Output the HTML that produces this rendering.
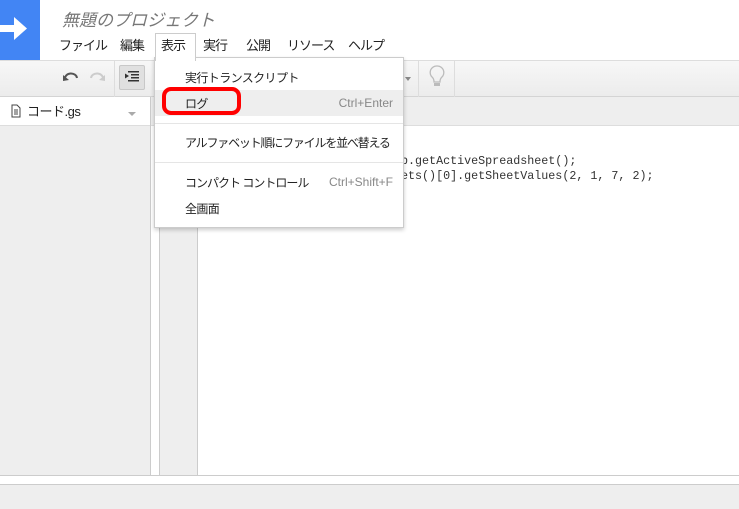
<!DOCTYPE html>
<html><head><meta charset="utf-8"><style>
*{margin:0;padding:0;box-sizing:border-box}
body{width:739px;height:509px;overflow:hidden;background:#fff;position:relative;font-family:"Liberation Sans","Noto Sans CJK JP",sans-serif;color:#222}
.a{position:absolute}
.m{font-size:13px;top:35px;color:#222;white-space:nowrap;letter-spacing:-1px}
.mi{position:absolute;left:30px;font-size:12px;color:#222;white-space:nowrap;letter-spacing:-0.6px}
.sc{position:absolute;right:10px;font-size:12px;color:#888;white-space:nowrap}
.code{position:absolute;font-family:"Liberation Mono",monospace;font-size:11.7px;color:#333;white-space:pre}
</style></head><body>
<div class="a" style="left:0;top:0;width:40px;height:60px;background:#4285f4">
<svg width="40" height="60" style="position:absolute;left:0;top:0"><rect x="0" y="25" width="18" height="7" fill="#fff"/><polygon points="14,17 27,28.5 14,40" fill="#fff"/></svg></div>
<div class="a" style="left:62px;top:6px;font-size:17px;font-style:italic;color:#777">無題のプロジェクト</div>
<div class="a m" style="left:59px">ファイル</div>
<div class="a m" style="left:120px">編集</div>
<div class="a" style="left:155px;top:33px;width:41px;height:28px;border:1px solid #ccc;border-bottom:none;background:#fff;z-index:3"></div>
<div class="a m" style="left:161px;z-index:4">表示</div>
<div class="a m" style="left:203px">実行</div>
<div class="a m" style="left:246px">公開</div>
<div class="a m" style="left:287px">リソース</div>
<div class="a m" style="left:348px">ヘルプ</div>
<!-- toolbar -->
<div class="a" style="left:0;top:60px;width:739px;height:37px;background:linear-gradient(#f7f7f7,#ececec);border-top:1px solid #ddd;border-bottom:1px solid #d4d4d4"></div>
<div class="a" style="left:114px;top:60px;width:1px;height:37px;background:#ddd"></div>
<div class="a" style="left:418px;top:60px;width:1px;height:37px;background:#ddd"></div>
<div class="a" style="left:454px;top:60px;width:1px;height:37px;background:#ddd"></div>
<svg class="a" style="left:60px;top:68px" width="50" height="20"><path d="M5 11 A6 5 0 0 1 17 10" stroke="#555" stroke-width="2" fill="none"/><polygon points="3,7 9,12 3,13" fill="#555"/><path d="M43 11 A6 5 0 0 0 31 10" stroke="#ccc" stroke-width="2" fill="none"/><polygon points="45,7 39,12 45,13" fill="#ccc"/></svg>
<div class="a" style="left:119px;top:65px;width:26px;height:25px;border:1px solid #c8c8c8;border-radius:2px;background:#e0e0e0"></div>
<svg class="a" style="left:124px;top:70px" width="16" height="14"><rect x="4" y="1" width="11" height="1.5" fill="#333"/><rect x="7" y="4" width="8" height="1.5" fill="#333"/><rect x="7" y="7" width="8" height="1.5" fill="#333"/><rect x="4" y="10" width="11" height="1.5" fill="#333"/><polygon points="1,3.5 5,6 1,8.5" fill="#333"/></svg>
<div class="a" style="left:405px;top:77px;width:0;height:0;border:3px solid transparent;border-top:4px solid #888"></div>
<svg class="a" style="left:428px;top:64px" width="18" height="28"><path d="M9 2 A6.5 6.5 0 0 0 4.5 13.5 Q6 15 6 18 L12 18 Q12 15 13.5 13.5 A6.5 6.5 0 0 0 9 2Z" stroke="#bbb" stroke-width="1.3" fill="none"/><rect x="6" y="19" width="6" height="3" fill="#bbb"/></svg>
<!-- left panel -->
<div class="a" style="left:0;top:97px;width:151px;height:378px;background:#eee;border-right:1px solid #ccc"></div>
<div class="a" style="left:0;top:97px;width:150px;height:29px;background:#fff;border-bottom:1px solid #ddd"></div>
<svg class="a" style="left:11px;top:104px" width="10" height="14"><path d="M1 1 H6 L9 4 V13 H1Z" stroke="#444" fill="none"/><path d="M3 6H7M3 8H7M3 10H7" stroke="#444"/></svg>
<div class="a" style="left:27px;top:101px;font-size:13px;color:#222;letter-spacing:-0.5px">コード.gs</div>
<div class="a" style="left:128px;top:112px;border:4px solid transparent;border-top:4px solid #aaa"></div>
<!-- tab bar -->
<div class="a" style="left:151px;top:97px;width:588px;height:29px;background:#eee;border-bottom:1px solid #ddd"></div>
<div class="a" style="left:159px;top:126px;width:39px;height:349px;background:#eee;border-left:1px solid #ccc;border-right:1px solid #ccc"></div>
<div class="code" style="left:401px;top:154px">p.getActiveSpreadsheet();</div>
<div class="code" style="left:401px;top:169px">ets()[0].getSheetValues(2, 1, 7, 2);</div>
<!-- footer -->
<div class="a" style="left:0;top:475px;width:739px;height:1px;background:#ccc"></div>
<div class="a" style="left:0;top:484px;width:739px;height:25px;background:#eee;border-top:1px solid #ccc"></div>
<!-- menu -->
<div class="a" style="left:154px;top:57px;width:250px;height:171px;background:#fff;border:1px solid #ccc;box-shadow:0 2px 4px rgba(0,0,0,.2);z-index:2">
<div class="mi" style="top:11px">実行トランスクリプト</div>
<div style="position:absolute;left:0;top:32px;width:248px;height:26px;background:#eee"></div>
<div class="mi" style="top:37px">ログ</div><div class="sc" style="top:38px">Ctrl+Enter</div>
<div style="position:absolute;left:0;top:65px;width:248px;height:1px;background:#e5e5e5"></div>
<div class="mi" style="top:76px;letter-spacing:-1.2px">アルファベット順にファイルを並べ替える</div>
<div style="position:absolute;left:0;top:104px;width:248px;height:1px;background:#e5e5e5"></div>
<div class="mi" style="top:116px;letter-spacing:-1px">コンパクト コントロール</div><div class="sc" style="top:117px">Ctrl+Shift+F</div>
<div class="mi" style="top:142px">全画面</div>
<div style="position:absolute;left:7px;top:29px;width:79px;height:28px;border:4px solid #f00;border-radius:9px"></div>
</div>
</body></html>
